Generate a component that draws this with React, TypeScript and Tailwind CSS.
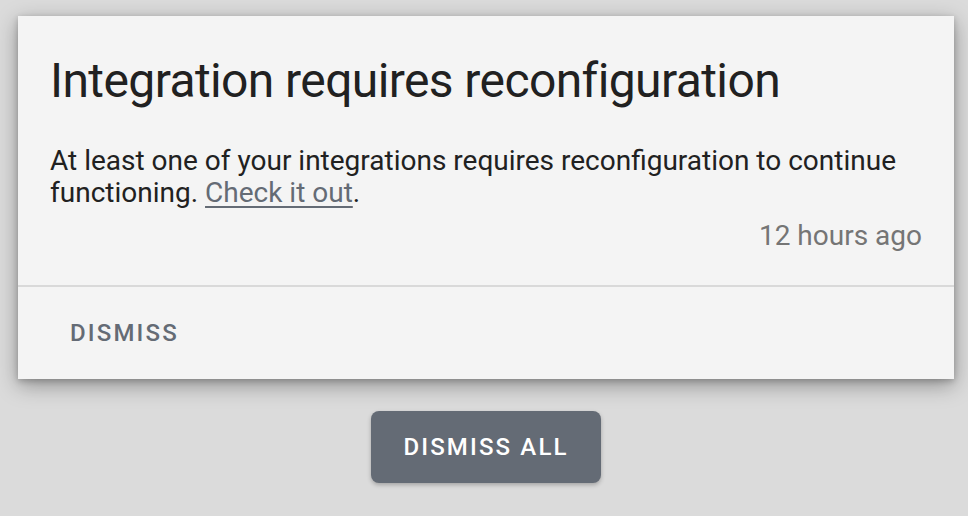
import React from "react";

export default function App() {
  return (
    <div
      className="w-full h-[516px] bg-[#dbdbdb] pt-[16px] overflow-hidden"
      style={{ fontFamily: "Roboto, 'Noto Sans', sans-serif" }}
    >
      <div className="ml-[18px] w-[936px] bg-[#f4f4f4] shadow-[0_6px_20px_rgba(0,0,0,0.35),0_2px_6px_rgba(0,0,0,0.2)] flex flex-col">
        <div className="px-[32px] pt-[37px]">
          <h1 className="text-[48px] leading-[56px] tracking-[-0.6px] text-[#212121] font-normal">
            Integration requires reconfiguration
          </h1>
          <p className="mt-[36px] text-[28px] leading-[32px] text-[#212121]">
            At least one of your integrations requires reconfiguration to continue functioning.{" "}
            <a className="text-[#646b75] underline underline-offset-[4px] decoration-[2px]" href="#">
              Check it out
            </a>
            .
          </p>
          <div className="mt-[11px] text-right text-[28px] leading-[32px] text-[#757575]">
            12 hours ago
          </div>
        </div>
        <div className="mt-[33px] h-[2px] bg-[#d9d9d9]" />
        <div className="h-[92px] flex items-center px-[36px]">
          <button className="px-[16px] h-[72px] text-[24px] font-medium tracking-[0.0892em] text-[#646b75] uppercase">
            Dismiss
          </button>
        </div>
      </div>
      <div className="ml-[18px] w-[936px] flex justify-center mt-[32px]">
        <button className="w-[230px] h-[72px] rounded-[8px] bg-[#646b75] text-white text-[24px] font-medium tracking-[0.0892em] shadow-[0_2px_4px_rgba(0,0,0,0.25)]">
          DISMISS ALL
        </button>
      </div>
    </div>
  );
}
